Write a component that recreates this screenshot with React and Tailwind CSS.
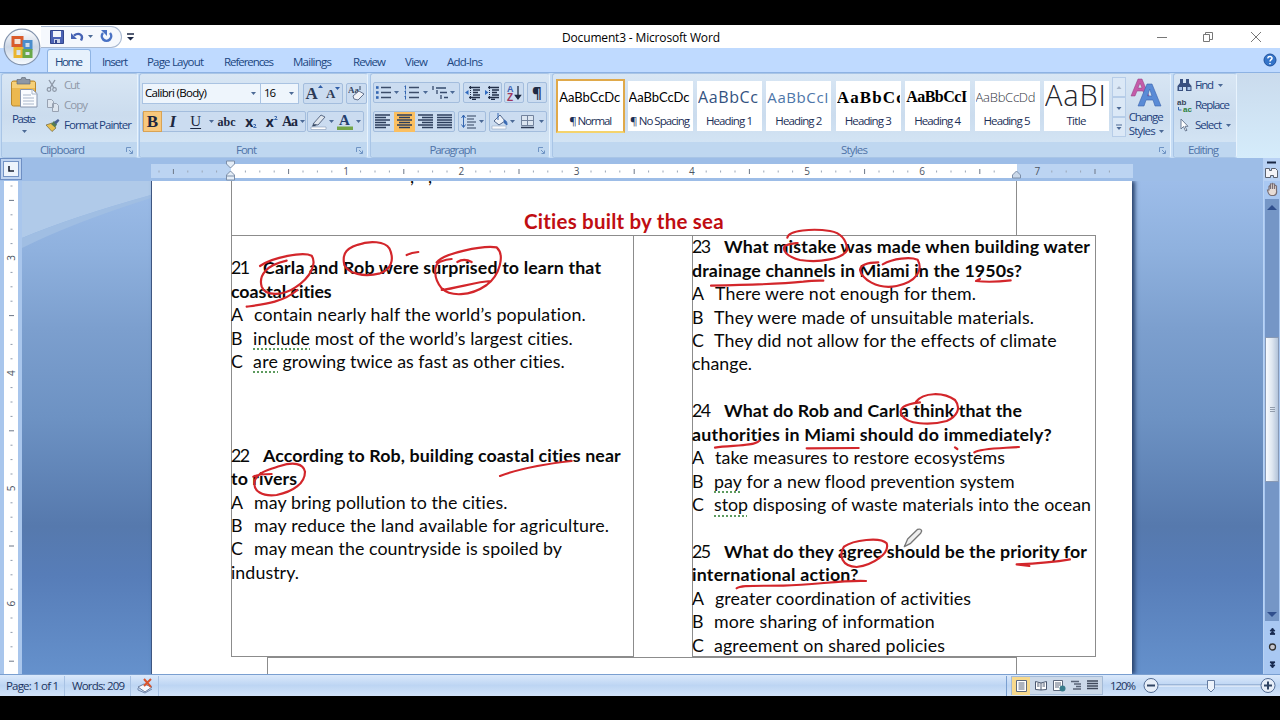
import { useLayoutEffect, useRef, useState } from "react";

/* Text spread over an exact width by adjusting its letter spacing. */
function Fit({ w, children, className = "" }) {
  const ref = useRef(null);
  const [ls, setLs] = useState(0);
  useLayoutEffect(() => {
    const el = ref.current;
    el.style.letterSpacing = "0px";
    el.style.width = "auto";
    const natural = el.getBoundingClientRect().width;
    const n = Math.max(1, el.textContent.length - 1);
    const next = (w - natural) / n;
    el.style.letterSpacing = next + "px";
    el.style.width = w + "px";
    setLs(next);
  }, [w, children]);
  return (
    <span ref={ref} className={"inline-block shrink-0 whitespace-pre " + className} style={{ letterSpacing: ls + "px", width: w }}>
      {children}
    </span>
  );
}

const Caret = ({ className = "" }) => (
  <svg width="5" height="3" viewBox="0 0 5 3" className={"shrink-0 " + className}>
    <path d="M0 0h5L2.500 3z" fill="#4c6a96" />
  </svg>
);

const Launcher = () => (
  <svg width="7" height="7" viewBox="0 0 7 7" className="mr-1">
    <path d="M.5 5V.5H5M3 3l3 3M6.500 3.500v3h-3" fill="none" stroke="#6f94c4" />
  </svg>
);

function Group({ label, w, children, launcher, labelW }) {
  return (
    <div className={"flex h-[85px] shrink-0 flex-col overflow-hidden rounded-[3px] border border-[#a9c5e6] border-r-[#e8f3fd] bg-linear-to-b from-[#d8e6f4] via-[#cbdcee] to-[#d7e8f7] " + w}>
      <div className="flex h-[68px] shrink-0">{children}</div>
      <div className="flex h-4 shrink-0 items-center bg-[#bfd7f0] text-[11.500px] text-[#4f74a8]">
        <div className="flex flex-1 justify-center pr-[3px]">
          <Fit w={labelW}>{label}</Fit>
        </div>
        {launcher && <Launcher />}
      </div>
    </div>
  );
}

const box = "flex h-[21px] shrink-0 items-center rounded-[2px] border border-[#a3bddd] bg-[#cbdcf0]";

function Lines({ x = 0, widths, color = "#2c3e5c", y = 1, gap = 2.5 }) {
  return (
    <svg width="16" height="15" viewBox="0 0 16 15" className="shrink-0">
      {widths.map(([a, b], i) => (
        <path key={i} d={`M${a + x} ${y + i * gap}H${b + x}`} stroke={color} strokeWidth="1.3" />
      ))}
    </svg>
  );
}

function Clipboard() {
  return (
    <Group label="Clipboard" w="w-[137px]" labelW={45} launcher>
      <div className="flex w-[44px] flex-col items-center pt-[3px] text-[11.500px] text-[#1d3f7c]">
        <svg width="28" height="32" viewBox="0 0 28 32">
          <rect x="1.500" y="4" width="24" height="25" rx="2" fill="#ecb84f" stroke="#b9892f" />
          <path d="M2 5h23v6H2z" fill="#f6d078" />
          <path d="M7 2.500h4a2.500 2.500 0 0 1 5 0h4V7H7z" fill="#8d97a5" stroke="#626b78" strokeWidth=".7" />
          <path d="M10.500 12.500h12l4.500 4v13.500h-16.500z" fill="#fafcff" stroke="#8895ad" />
          <path d="M22 12.500v4.500h5M13 18h8M13 21h11M13 24h11M13 27h11" fill="none" stroke="#a9b6ca" />
        </svg>
        <div className="mt-[2px] h-4 leading-4"><Fit w={24}>Paste</Fit></div>
        <Caret className="mt-[3px]" />
      </div>
      <div className="flex flex-col pt-[1px] text-[11.500px] text-[#9099a8]">
        <div className="flex h-5 items-center gap-1.5">
          <svg width="12" height="13" viewBox="0 0 12 13"><path d="M3 1l5 8M9 1L4 9" stroke="#8d97a6" strokeWidth="1.400" /><circle cx="3" cy="10.500" r="1.800" fill="none" stroke="#8d97a6" strokeWidth="1.200" /><circle cx="8.500" cy="10.500" r="1.800" fill="none" stroke="#8d97a6" strokeWidth="1.200" /></svg>
          <Fit w={16}>Cut</Fit>
        </div>
        <div className="flex h-5 items-center gap-1">
          <svg width="14" height="13" viewBox="0 0 14 13"><path d="M1.500.5h4l2 2v6h-6zM6.500 4.500h4l2 2v6h-6z" fill="#dde5ef" stroke="#98a2b2" /></svg>
          <Fit w={24}>Copy</Fit>
        </div>
        <div className="flex h-5 items-center gap-1 text-[#1d3f7c]">
          <svg width="14" height="13" viewBox="0 0 14 13"><path d="M0 6l6-2 4 5-4 3.500z" fill="#e9c14e" stroke="#6e6440" strokeWidth=".7" /><path d="M5 5l3-3 3 3.500-2 3z" fill="#557c54" /><path d="M8 3l4-3 1.500 1.500L10 5.500z" fill="#4b6193" /></svg>
          <Fit w={68}>Format Painter</Fit>
        </div>
      </div>
    </Group>
  );
}

function FontGroup() {
  return (
    <Group label="Font" w="ml-[1px] w-[229px]" labelW={21} launcher>
      <div className="flex flex-col pl-[2px] text-[11.500px]">
        <div className="mt-[8px] flex h-[22px] items-center">
          <div className="flex h-[21px] w-[119px] items-center justify-between border border-[#a9c3e2] bg-[#eef5fc] pr-1 pl-[2px] text-black"><Fit w={62}>Calibri (Body)</Fit><Caret /></div>
          <div className="flex h-[21px] w-[38px] items-center justify-between border border-l-0 border-[#a9c3e2] bg-[#eef5fc] pr-1 pl-[3px] text-black"><Fit w={12}>16</Fit><Caret /></div>
          <div className={box + " ml-[4px] w-[40px] justify-around font-['Liberation_Serif'] font-bold text-[#2c3b57]"}>
            <span className="flex items-start text-[17px] leading-none">A<svg width="5" height="4" viewBox="0 0 5 4"><path d="M0 3L2.500 0 5 3z" fill="#2f5da6" /></svg></span>
            <span className="flex items-start text-[13px] leading-none">A<svg width="5" height="4" viewBox="0 0 5 4"><path d="M0 0h5L2.500 3z" fill="#2f5da6" /></svg></span>
          </div>
          <div className={box + " ml-[3px] w-[21px] justify-center"}>
            <svg width="17" height="17" viewBox="0 0 17 17"><text x="0" y="8" fontSize="9" fontFamily="Liberation Serif" fontWeight="bold" fill="#34445f">Aa</text><path d="M5 11l6-5 5 3-6 6-4-1z" fill="#f1f3f8" stroke="#63728d" /><path d="M12 1v4" stroke="#34445f" /></svg>
          </div>
        </div>
        <div className={box + " mt-[7px] w-[164px] font-['Liberation_Serif'] font-bold text-[#1c2740]"}>
          <span className="flex h-[21px] w-[19px] items-center justify-center border border-[#d9a354] bg-[#f8c87c] text-[17px]">B</span>
          <span className="w-[22px] text-center text-[17px] italic">I</span>
          <span className="w-[24px] text-center text-[15px] font-normal underline underline-offset-2">U</span>
          <Caret className="mx-[1px]" />
          <span className="ml-[3px] w-[24px] text-[12px] line-through"><Fit w={18}>abc</Fit></span>
          <span className="flex w-[20px] justify-center font-['Open_Sans'] text-[14px] leading-none">x<svg width="4" height="14" viewBox="0 0 4 14"><path d="M.5 9.500h2v1.500l-2 1.500h3" fill="none" stroke="#2f5da6" strokeWidth=".9" /></svg></span>
          <span className="flex w-[21px] justify-center font-['Open_Sans'] text-[14px] leading-none">x<svg width="4" height="14" viewBox="0 0 4 14"><path d="M.5 1.500h2v1.500l-2 1.500h3" fill="none" stroke="#2f5da6" strokeWidth=".9" /></svg></span>
          <span className="w-[18px] text-[14px]"><Fit w={16}>Aa</Fit></span>
          <Caret />
        </div>
      </div>
      <div className="-ml-[60px] mt-[37px] flex">
        <div className={box + " w-[57px]"}>
          <svg width="19" height="17" viewBox="0 0 19 17" className="ml-[2px]"><path d="M3 11L11 2l4 2-7 8z" fill="#dfe6ee" stroke="#5b6b86" /><path d="M3 11l4 2-5 .5z" fill="#384861" /><path d="M1 14h15v2.500H1z" fill="#fff" stroke="#8598b5" strokeWidth=".6" /></svg>
          <Caret />
          <svg width="18" height="18" viewBox="0 0 18 18" className="ml-[2px]"><text x="3" y="12" fontSize="15" fontFamily="Liberation Serif" fontWeight="bold" fill="#23406f">A</text><path d="M1 13.500h16v3.500H1z" fill="#73a648" /></svg>
          <Caret className="ml-[2px]" />
        </div>
      </div>
    </Group>
  );
}

function ListIcon({ kind }) {
  return (
    <svg width="17" height="15" viewBox="0 0 17 15" className="shrink-0">
      {kind === "multi" ? (
        <g stroke="#35496b"><path d="M1 1v4M4 3h10M5 5v4M8 7.500h7M9 10v4M12 12.500h4" strokeWidth="1.300" /></g>
      ) : (
        <g>
          <path d="M6 2.500h10M6 7.500h10M6 12.500h10" stroke="#3b4c69" strokeWidth="1.300" />
          {[2.5, 7.5, 12.5].map((y) => kind === "num" ? <path key={y} d={`M2.500 ${y - 2}v4M1.500 ${y - 1}h1`} stroke="#3567b1" /> : <rect key={y} x="1" y={y - 1.3} width="2.600" height="2.600" fill="#3567b1" />)}
        </g>
      )}
    </svg>
  );
}

const Indent = ({ out }) => (
  <svg width="16" height="14" viewBox="0 0 16 14" className="shrink-0">
    <path d="M4 1.500h11M8 4h7M8 6.500h5M8 9h7M4 11.500h11M7 13.500h4" stroke="#222f48" strokeWidth="1.500" />
    <path d="M5.500 0v14" stroke="#222f48" strokeDasharray="1 1" />
    <path d={out ? "M0 6.500L3.500 4v5z" : "M4.500 6.500L1 4v5z"} fill="#2f6abf" />
  </svg>
);

function Paragraph() {
  const full = [0, 1, 2, 3, 4, 5].map(() => [0, 15]);
  const left = full.map((_, i) => [0, i % 2 ? 11 : 15]);
  const mid = full.map((_, i) => (i % 2 ? [2, 13] : [0, 15]));
  const right = full.map((_, i) => [i % 2 ? 4 : 0, 15]);
  return (
    <Group label="Paragraph" w="ml-[2px] w-[180px]" labelW={47} launcher>
      <div className="flex flex-col pl-[2px]">
        <div className="mt-[8px] flex">
          <div className={box + " w-[87px] pl-[1px]"}>
            <ListIcon /><Caret className="ml-[2px] mr-[4px]" /><ListIcon kind="num" /><Caret className="ml-[3px] mr-[4px]" /><ListIcon kind="multi" /><Caret className="ml-[1px]" />
          </div>
          <div className={box + " ml-[3px] w-[39px] justify-around"}><Indent out /><Indent /></div>
          <div className={box + " ml-[2px] w-[20px] justify-center"}>
            <svg width="16" height="18" viewBox="0 0 16 18"><text x="1" y="8" fontSize="9" fontFamily="Liberation Sans" fontWeight="bold" fill="#3b61b0">A</text><text x="1" y="17" fontSize="10" fontFamily="Liberation Sans" fontWeight="bold" fill="#a0365d">Z</text><path d="M12 2v12M9.500 11.500L12 15l2.500-3.500z" stroke="#1e2a42" strokeWidth="1.300" fill="#1e2a42" /></svg>
          </div>
          <div className={box + " ml-[3px] w-[20px] justify-center text-[15px] font-bold text-[#1d2a44]"}>¶</div>
        </div>
        <div className="mt-[8px] flex">
          <div className={box + " w-[82px] justify-between pr-[1px] pl-[1px]"}>
            <Lines widths={left} />
            <span className="flex h-[20px] w-[21px] items-center justify-center bg-[#fbbf60]"><Lines widths={mid} /></span>
            <Lines widths={right} />
            <Lines widths={full} />
          </div>
          <div className={box + " ml-[3px] w-[28px] gap-[2px] pl-[2px]"}>
            <svg width="16" height="15" viewBox="0 0 16 15"><path d="M6 2h9M6 5h7M6 8h9M6 11h7M6 14h9" stroke="#33435f" strokeWidth="1.200" /><path d="M2.500 1v12M.5 4l2-3 2 3M.5 10.500l2 3 2-3" fill="none" stroke="#3567b1" /></svg>
            <Caret />
          </div>
          <div className={box + " ml-[3px] w-[58px] pl-[1px]"}>
            <svg width="18" height="17" viewBox="0 0 18 17"><path d="M3 8l6-6 5 6-6 4z" fill="#eef2f8" stroke="#53688c" /><path d="M7 0v7M13 7c3 1 3 3 3 5-2-1-3-2-3-5z" stroke="#3768b2" fill="#3768b2" /><path d="M1 13h14v3H1z" fill="#f8fafc" stroke="#93a8c4" strokeWidth=".6" /></svg>
            <Caret className="ml-[1px] mr-[3px]" />
            <svg width="15" height="15" viewBox="0 0 15 15" className="ml-[2px]"><path d="M1.500 1.500h12v10h-12zM7.500 1.500v10M1.500 6.500h12" fill="#dbe5f1" stroke="#73839d" /><path d="M1 13.500h13" stroke="#2c3a54" strokeWidth="1.500" /></svg>
            <Caret className="ml-[4px]" />
          </div>
        </div>
      </div>
    </Group>
  );
}

const STYLES = [
  ["AaBbCcDc", "¶ Normal", 43, 61, "font-['Lato'] text-[13px] text-black"],
  ["AaBbCcDc", "¶ No Spacing", 60, 61, "font-['Lato'] text-[13px] text-black"],
  ["AaBbCc", "Heading 1", 47, 60, "font-['Open_Sans'] text-[16px] text-[#33527f]"],
  ["AaBbCcI", "Heading 2", 47, 61, "font-['Open_Sans'] text-[15px] text-[#4d76a9]"],
  ["AaBbCc", "Heading 3", 47, 67, "font-['Liberation_Serif'] font-bold text-[17px] text-black"],
  ["AaBbCcI", "Heading 4", 47, 61, "font-['Liberation_Serif'] font-bold text-[16px] text-black"],
  ["AaBbCcDd", "Heading 5", 47, 60, "font-['Open_Sans'] font-light text-[13px] text-[#33373f]"],
  ["AaBI", "Title", 20, 61, "font-['Open_Sans'] font-light text-[29px] text-[#1f242b]"],
];

function StylesGroup() {
  return (
    <Group label="Styles" w="ml-[2px] w-[619px]" labelW={27} launcher>
      <div className="flex h-[62px] pt-[5px] pl-[3px]">
        {STYLES.map(([sample, name, w, sw, cls], i) => (
          <div key={name} className={"flex h-[54px] w-[69.400px] shrink-0 flex-col items-center overflow-hidden border-2 " + (i === 0 ? "border-[#e0a94a] border-b-[#f4d36c] bg-white" : "border-transparent bg-clip-padding")}>
            <div className={"flex h-[50px] w-[65px] flex-col items-center bg-white"}>
              <div className={"flex h-[32px] w-[63px] shrink-0 items-center overflow-hidden whitespace-nowrap leading-none " + cls + (i === 7 ? " -mt-[3px] mb-[3px]" : "")}><Fit w={sw}>{sample}</Fit></div>
              <div className="flex h-[16px] shrink-0 items-center text-[11.500px] leading-4 text-[#1c2f57]"><Fit w={w}>{name}</Fit></div>
            </div>
          </div>
        ))}
      </div>
      <div className="mt-[3px] ml-[1px] flex h-[60px] w-[14px] flex-col">
        {["up", "down", "more"].map((k) => (
          <div key={k} className="flex h-5 items-center justify-center border border-[#b7cde8] bg-[#dbe8f6]">
            <svg width="6" height="7" viewBox="0 0 6 7"><path d={k === "up" ? "M.5 5L3 2l2.500 3z" : "M.5 3L3 6l2.500-3z"} fill={k === "up" ? "#a7b5c8" : "#4c6a96"} />{k === "more" && <path d="M0 1h6" stroke="#4c6a96" />}</svg>
          </div>
        ))}
      </div>
      <div className="flex w-[40px] flex-col items-center pt-[4px] text-[11.500px] text-[#1d3f7c]">
        <svg width="32" height="30" viewBox="0 0 32 30"><path fillRule="evenodd" d="M1 18L8 1h4l7 17h-4l-2-5H7l-2 5zM8 10h4l-2-5z" fill="#c45ba9" stroke="#8d3c7c" strokeWidth=".5" /><path fillRule="evenodd" d="M8 28L17 6h5l9 22h-6l-2-6h-7l-2 6zM17.500 18h4.500l-2.300-7z" fill="#5a8bd6" stroke="#3a63ac" strokeWidth=".6" /></svg>
        <div className="mt-[2px] h-[14px] leading-[14px]"><Fit w={35}>Change</Fit></div>
        <div className="flex h-[14px] items-center gap-[3px] leading-[14px]"><Fit w={27}>Styles</Fit><Caret /></div>
      </div>
    </Group>
  );
}

function Editing() {
  return (
    <Group label="Editing" w="ml-[2px] w-[64px]" labelW={31}>
      <div className="flex flex-col pt-[1px] pl-[3px] text-[11.500px] text-[#1d3f7c]">
        <div className="flex h-5 items-center gap-[3px]">
          <svg width="15" height="13" viewBox="0 0 15 13"><path d="M3 0h3v4h3V0h3v4l2.500 3v5H9V8H6v4H.5V7L3 4z" fill="#39507f" /><path d="M2 8h3v3H2zM10.500 8h3v3h-3z" fill="#a9c4e9" /></svg>
          <Fit w={19}>Find</Fit><Caret className="ml-[1px]" />
        </div>
        <div className="flex h-5 items-center gap-[3px]">
          <svg width="15" height="15" viewBox="0 0 15 15"><text x="0" y="7" fontSize="8" fontWeight="bold" fontFamily="Liberation Sans" fill="#394559">ab</text><text x="6" y="14" fontSize="8" fontWeight="bold" fontFamily="Liberation Sans" fill="#2b803c">ac</text><path d="M1.500 9v3h3" fill="none" stroke="#3567b1" /></svg>
          <Fit w={35}>Replace</Fit>
        </div>
        <div className="flex h-5 items-center gap-[4px]">
          <svg width="14" height="14" viewBox="0 0 14 14"><path d="M4 1v10l2.500-2.500L8.500 13l1.500-.7-2-4H11z" fill="#fff" stroke="#6d7d96" /></svg>
          <Fit w={27}>Select</Fit><Caret />
        </div>
      </div>
    </Group>
  );
}

function HRuler() {
  const ticks = [];
  for (let k = -5; k < 62; k++) {
    const x = 80 + k * 14.4;
    if (k === 0 || k === 54 || k === 55) continue;
    if (k > 0 && k % 8 === 0) ticks.push(<text key={k} x={x} y="11" fontSize="10" textAnchor="middle" fill="#4c5563" fontFamily="Open Sans">{k / 8}</text>);
    else if (Math.abs(k) % 4 === 0) ticks.push(<path key={k} d={`M${x} 5v5`} stroke="#6d7787" />);
    else ticks.push(<path key={k} d={`M${x} 6.500v2`} stroke="#9aa5b5" />);
  }
  return (
    <svg width="982" height="23" viewBox="0 -6 982 23">
      <rect width="982" height="14" fill="#bcd4f2" />
      <rect x="80" width="786" height="14" fill="#fff" />
      {ticks}
      <path d="M75.500-3h8v3l-4 4-4-4zM79.500 7l4 4v5h-8v-5zM75.500 12h8" fill="#e4edf7" stroke="#7d8fa9" />
      <path d="M861.500 11l4-4 4 4v3h-8z" fill="#cbd9ea" stroke="#7d8fa9" />
    </svg>
  );
}

function VRuler() {
  const ticks = [];
  for (let k = -5; k < 29; k++) {
    const y = 77 + k * 14.4;
    if (k >= 0 && k % 8 === 0) ticks.push(<text key={k} x="0" y="0" transform={`translate(11 ${y}) rotate(-90)`} fontSize="10" textAnchor="middle" fill="#4c5563" fontFamily="Open Sans">{3 + k / 8}</text>);
    else if (Math.abs(k) % 4 === 0) ticks.push(<path key={k} d={`M5 ${y}h5`} stroke="#6d7787" />);
    else ticks.push(<path key={k} d={`M6.500 ${y}h2`} stroke="#8f9aab" />);
  }
  return (
    <div className="flex w-[22px] shrink-0 bg-[#a9c6ec] pl-1">
      <svg width="14" height="493" viewBox="0 0 14 493" className="bg-white">{ticks}</svg>
    </div>
  );
}

/* Rows of a table cell: marker, marker width, text, text width, bold, remainder after an underlined word, its width */
const LEFT = [
  ["21", 32, "Carla and Rob were surprised to learn that", 338, true],
  ["", 0, "coastal cities", 101, true],
  ["A", 23, "contain nearly half the world’s population.", 332],
  ["B", 22, "include", 57, false, " most of the world’s largest cities.", 263],
  ["C", 22, "are", 25, false, " growing twice as fast as other cities.", 287],
  null, null, null,
  ["22", 32, "According to Rob, building coastal cities near", 358, true],
  ["", 0, "to rivers", 66, true],
  ["A", 23, "may bring pollution to the cities.", 254],
  ["B", 23, "may reduce the land available for agriculture.", 355],
  ["C", 23, "may mean the countryside is spoiled by", 308],
  ["", 0, "industry.", 68],
];
const RIGHT = [
  ["23", 32, "What mistake was made when building water", 366, true],
  ["", 0, "drainage channels in Miami in the 1950s?", 330, true],
  ["A", 23, "There were not enough for them.", 261],
  ["B", 22, "They were made of unsuitable materials.", 320],
  ["C", 22, "They did not allow for the effects of climate", 342],
  ["", 0, "change.", 60],
  null,
  ["24", 32, "What do Rob and Carla think that the", 298, true],
  ["", 0, "authorities in Miami should do immediately?", 360, true],
  ["A", 23, "take measures to restore ecosystems", 290],
  ["B", 22, "pay", 28, false, " for a new flood prevention system", 273],
  ["C", 22, "stop", 34, false, " disposing of waste materials into the ocean", 343],
  null,
  ["25", 32, "What do they agree should be the priority for", 363, true],
  ["", 0, "international action?", 167, true],
  ["A", 23, "greater coordination of activities", 257],
  ["B", 22, "more sharing of information", 221],
  ["C", 22, "agreement on shared policies", 231],
];

function Rows({ rows }) {
  return rows.map((r, i) => (
    <div key={i} className="-ml-px flex h-[23.450px] items-center whitespace-pre font-['Lato',sans-serif] text-[17.800px] leading-[23px] text-[#080808]">
      {r && (
        <>
          {r[0] && <span className="shrink-0" style={{ width: r[1] }}>{r[0].length > 1 ? <Fit w={19}>{r[0]}</Fit> : r[0]}</span>}
          <Fit w={r[3]} className={r[4] ? "font-bold" : r[5] ? "underline decoration-[#5d9b5f] decoration-dotted decoration-[1.5px] underline-offset-[4px] [text-decoration-skip-ink:none]" : ""}>{r[2]}</Fit>
          {r[5] && <Fit w={r[6]}>{r[5]}</Fit>}
        </>
      )}
    </div>
  ));
}

/* Freehand pen strokes over the document; each group has its own origin, three units per pixel. */
function Ink() {
  return (
    <svg className="pointer-events-none absolute top-0 left-0" width="1280" height="720" viewBox="0 0 1280 720">
      <g fill="none" stroke="#d3262b" strokeWidth="6.500" strokeLinecap="round" strokeLinejoin="round">
        <g transform="translate(150 165) scale(.33333)">
          <path d="M330 303C370 275 460 260 485 272C500 295 485 335 435 368C400 392 345 395 335 365C325 330 350 300 410 287M290 425C340 418 400 412 442 375" />
          <path d="M622 240C660 225 705 230 718 250C735 285 722 315 690 325C640 338 595 325 583 300C575 265 590 245 640 235M770 270Q785 263 805 261" />
          <path d="M860 292C880 265 1000 240 1040 247C1065 270 1050 330 1010 360C960 395 900 395 875 370C850 340 850 300 870 290C885 284 895 282 905 282M922 291C935 283 950 283 965 291M875 375C920 370 980 350 1022 348" />
        </g>
        <g transform="translate(640 175) scale(.33333)">
          <path d="M442 188C445 165 520 160 570 168C610 175 620 200 622 225C610 250 540 265 480 255C440 245 425 225 435 212C450 205 465 205 473 204" />
          <path d="M213 332C320 330 440 325 490 320Q520 316 550 317M728 268C760 250 810 245 833 254C850 285 830 320 770 333C710 345 665 310 660 285C662 270 680 262 715 262M1020 312L1008 318C1040 322 1080 320 1112 316" />
        </g>
        <g transform="translate(220 430) scale(.33333)">
          <path d="M840 138C900 115 990 100 1055 93M100 140C115 132 130 132 155 132M105 150C95 185 130 200 170 195C220 185 255 160 255 125C250 100 220 95 180 108C150 118 115 125 105 150" />
        </g>
        <g transform="translate(640 395) scale(.33333)">
          <path d="M828 20C850 -8 910 -10 945 15C965 40 950 65 920 78C870 92 800 88 785 60C775 40 790 28 840 22M225 158C270 150 340 155 357 138M500 160L656 159M945 157L952 162M1003 172C1020 160 1080 160 1137 156" />
          <path d="M612 455C640 435 720 425 740 445C750 475 700 510 650 516C605 515 595 480 612 455M1130 508C1200 505 1250 500 1290 493M1130 508L1168 513M290 580C300 570 350 573 430 572C530 570 600 555 678 558" />
          <path d="M793 455L803 432L833 403Q843 400 845 408L842 415L812 445Z" fill="#eee" stroke="#777" strokeWidth="4" />
        </g>
      </g>
    </svg>
  );
}

function OfficeButton() {
  return (
    <svg className="absolute top-[28px] left-[3px]" width="39" height="39" viewBox="0 0 39 39">
      <defs><linearGradient id="orb" x1="0" y1="0" x2="0" y2="1"><stop offset="0" stopColor="#fff" /><stop offset=".5" stopColor="#ccd7e6" /><stop offset="1" stopColor="#f7fbff" /></linearGradient></defs>
      <circle cx="19" cy="19" r="17.800" fill="url(#orb)" stroke="#8495ae" strokeWidth="1.200" />
      <g fill="none" strokeWidth="3">
        <path d="M10 9.500h9v8h-9z" stroke="#da5b2a" />
        <path d="M21 13.500h7v7h-7z" stroke="#4a8dcc" />
        <path d="M12 20.500h7v8h-7z" stroke="#e9b52f" />
        <path d="M21 22.500h7v6h-7z" stroke="#69a848" />
      </g>
      <path d="M12 11.500h5v4h-5z" fill="#fbe3cf" />
    </svg>
  );
}

const TABS = [["Insert", 102, 26], ["Page Layout", 147, 57], ["References", 224, 50], ["Mailings", 293, 39], ["Review", 353, 33], ["View", 405, 23], ["Add-Ins", 447, 36]];

function Tabs() {
  return (
    <div className="flex h-6 items-end bg-[#bfdaff] text-[11.500px] text-[#20467f]">
      <div className="ml-[47px] flex h-[23px] w-[44px] items-center justify-center rounded-t-[3px] border border-b-0 border-[#8fb4e4] bg-[#e6f1fc] pt-[2px]"><Fit w={28}>Home</Fit></div>
      {TABS.map(([t, x, w], i) => {
        const prev = i ? TABS[i - 1][1] + TABS[i - 1][2] : 91;
        return <div key={t} className="flex h-[22px] items-center pt-[2px]" style={{ paddingLeft: x - prev }}><Fit w={w}>{t}</Fit></div>;
      })}
      <div className="ml-auto flex h-6 items-center pr-[3px]">
        <svg width="14" height="14" viewBox="0 0 14 14"><circle cx="7" cy="7" r="6" fill="#3474c9" stroke="#20519c" /><path d="M4.700 5.300C5 2.800 9.300 3 9 5.300 8.800 6.700 7 6.600 7 8.500M7 10v1.300" fill="none" stroke="#fff" strokeWidth="1.500" /></svg>
      </div>
    </div>
  );
}

function TitleBar() {
  return (
    <div className="flex h-[23px] items-center bg-white">
      <div className="ml-[41px] flex h-[22px] w-[81px] items-center rounded-r-[11px] border border-l-0 border-[#a8b8d0] bg-[#f5f8fd] pl-[9px]">
        <svg width="14" height="14" viewBox="0 0 14 14"><path d="M.5.5h13v13h-13z" fill="#4b62b5" stroke="#33468d" /><path d="M3 1h8v6H3z" fill="#f1f4fb" /><path d="M4 9h6v4H4z" fill="#ccd5ea" /><path d="M5 10h2v3H5z" fill="#33468d" /></svg>
        <svg width="13" height="12" viewBox="0 0 13 12" className="ml-[7px]"><path d="M3 4.500C8 1 13 4 10 9.500" fill="none" stroke="#4562b4" strokeWidth="2.400" /><path d="M0 2v6h6z" fill="#4562b4" /></svg>
        <Caret className="ml-[4px]" />
        <svg width="13" height="13" viewBox="0 0 13 13" className="ml-[7px]"><path d="M3 3a4.700 4.700 0 1 0 7 0" fill="none" stroke="#4a72c4" strokeWidth="2.500" /><path d="M1 0h6v6z" fill="#4a72c4" /></svg>
      </div>
      <svg width="7" height="8" viewBox="0 0 7 8" className="ml-[5px]"><path d="M0 1h7" stroke="#1d2946" strokeWidth="1.500" /><path d="M0 4h7L3.500 7.500z" fill="#1d2946" /></svg>
      <div className="ml-[428px] pt-[2px] text-[12px] text-black"><Fit w={158}>Document3 - Microsoft Word</Fit></div>
      <svg className="mr-[18px] ml-auto" width="106" height="12" viewBox="0 0 106 12">
        <path d="M1 6.500h10M47.500 3.500h6v7h-6zM49.500 3.500v-2h7v7h-3M95 1l10 10M105 1L95 11" fill="none" stroke="#777" />
      </svg>
    </div>
  );
}

function ScrollBar() {
  return (
    <div className="flex w-[17px] shrink-0 flex-col items-center border-l border-[#b9d3f4] bg-[#a9c8f2]">
      <svg width="15" height="18" viewBox="0 0 15 18"><path d="M2.500 9l1.500 0V5.500L5.500 4v4-5L7.500 2.500V8 2.500L9.500 3v5-4l2 1v4.500C12 12 10.500 14 9 14.500H6C4 14 3 12 2.500 9z" fill="#e6dcd6" stroke="#796f75" strokeWidth="1.200" /></svg>
      <div className="flex h-[422px] w-[14px] flex-col items-center bg-[#7596c6]">
        <svg width="10" height="138" viewBox="0 0 10 138"><path d="M0 11l5-5 5 5z" fill="#304f8d" /></svg>
        <div className="flex h-[145px] w-[14px] items-center justify-center border border-[#8799b5] bg-linear-to-r from-[#f8fbff] via-[#dfe7f0] to-[#b3c4da]">
          <svg width="5" height="5" viewBox="0 0 5 5"><path d="M0 .5h5M0 2.500h5M0 4.500h5" stroke="#929dac" /></svg>
        </div>
        <svg className="mt-auto" width="10" height="12" viewBox="0 0 10 12"><path d="M0 3l5 5 5-5z" fill="#304f8d" /></svg>
      </div>
      <svg width="11" height="53" viewBox="0 0 11 53"><path d="M3 10l2.500-3L8 10zM3 13l2.500-3L8 13zM3 13.500h5" fill="#16294f" stroke="#16294f" strokeWidth=".8" /><circle cx="5.500" cy="26" r="3" fill="#c5c6ce" stroke="#333" strokeWidth="1.300" /><path d="M3 41l2.500 3L8 41zM3 44l2.500 3L8 44zM3 41h5" fill="#16294f" stroke="#16294f" strokeWidth=".8" /></svg>
    </div>
  );
}

function Document() {
  return (
    <div className="flex h-[493px] w-[981px] shrink-0 flex-col overflow-hidden border-l border-[#3e5681] bg-white pl-[79px] shadow-[3px_0_4px_#2b4570]">
      <div className="flex h-[55px] w-[786px] shrink-0 flex-col items-center border-x border-b border-[#8c8c8c]">
        <div className="-mt-[15px] flex h-[20px] self-start pl-[178px] font-['Lato'] text-[18px] leading-5"><Fit w={22}>{", ,"}</Fit></div>
        <div className="mt-[23px] flex h-6 items-center font-['Lato',sans-serif] text-[20.500px] font-bold text-[#c00d12]"><Fit w={200}>Cities built by the sea</Fit></div>
      </div>
      <div className="-mt-px flex h-[422px] shrink-0">
        <div className="w-[403px] shrink-0 border border-[#8c8c8c] pt-[20px]"><Rows rows={LEFT} /></div>
        <div className="w-[58px] shrink-0" />
        <div className="w-[404px] shrink-0 border border-[#8c8c8c]"><div className="-mt-px"><Rows rows={RIGHT} /></div></div>
      </div>
      <div className="ml-[36px] h-5 w-[750px] shrink-0 border border-[#8c8c8c]" />
    </div>
  );
}

function StatusBar() {
  const sep = "ml-[5px] h-[20px] w-px bg-[#a8c2e4]";
  return (
    <div className="flex h-[22px] items-center border-t border-[#7a9fd0] bg-linear-to-b from-[#dbe9fb] via-[#bdd5f3] to-[#d3e4f9] text-[11.500px] text-[#1b3460]">
      <div className="ml-[6px]"><Fit w={53}>Page: 1 of 1</Fit></div>
      <div className={sep} />
      <div className="ml-[7px]"><Fit w={53}>Words: 209</Fit></div>
      <div className={sep} />
      <svg width="16" height="16" viewBox="0 0 16 16" className="ml-[6px]"><path d="M1 9l6-3 8 3-7 5z" fill="#f7f9fd" stroke="#697b9c" /><path d="M1 10v2l7 3 7-4" fill="none" stroke="#7388ad" /><path d="M7 1l7 8M14 1L7 8" stroke="#d9542c" strokeWidth="2" /></svg>
      <div className={sep} />
      <div className="ml-auto flex h-[20px] items-center border-l border-[#7a9fd0] pl-[4px]">
        <div className="flex h-[19px] w-[92px] items-center justify-between border border-[#a4bad6] bg-[#ccd9e9] pr-[4px]">
          <span className="flex h-[18px] w-[18px] items-center justify-center bg-[#f7d98c]"><svg width="11" height="12" viewBox="0 0 11 12"><path d="M.5.5h10v11H.5zM2.500 3h6M2.500 5h6M2.500 7h6M2.500 9h6" fill="#fff" stroke="#5c687c" /></svg></span>
          <svg width="12" height="11" viewBox="0 0 12 11"><path d="M.5 1.500L6 3l5.500-1.500v8L6 10 .5 9.500zM6 3v7M2 4h2.500M2 6h2.500M7.500 4H10M7.500 6H10" fill="#fff" stroke="#4b5870" /></svg>
          <svg width="13" height="12" viewBox="0 0 13 12"><path d="M.5.5h9v10h-9zM2 3h6M2 5h6M2 7h4" fill="#fff" stroke="#5c687c" /><circle cx="9.500" cy="8.500" r="3" fill="#377b8b" /></svg>
          <svg width="11" height="11" viewBox="0 0 11 11"><path d="M0 1.500h8M3 4h7M5 6.500h5M2 9h8" stroke="#596477" strokeWidth="1.500" /></svg>
          <svg width="11" height="11" viewBox="0 0 11 11"><path d="M0 1h11M0 3.500h11M0 6h11M0 8.500h11" stroke="#3f495b" strokeWidth="1.500" /></svg>
        </div>
        <div className="ml-[7px]"><Fit w={26}>120%</Fit></div>
        <svg width="144" height="19" viewBox="0 0 144 19">
          <path d="M22 9h103" stroke="#7794be" /><path d="M22 10h103" stroke="#f3f8ff" />
          {[15, 132].map((x) => <g key={x}><circle cx={x} cy="9.500" r="7" fill="#e7eef8" stroke="#516b94" /><path d={x === 15 ? "M11 9.500h8" : "M128 9.500h8M132 5.500v8"} stroke="#304564" strokeWidth="2" /></g>)}
          <path d="M71.500 4.500h7v8L75 16 71.500 12.500z" fill="#edf3fb" stroke="#647ba0" />
        </svg>
      </div>
    </div>
  );
}

export default function App() {
  return (
    <div className="relative flex h-[720px] w-[1280px] flex-col overflow-hidden bg-black py-[25px] pb-6 font-['Open_Sans','Noto_Sans',sans-serif]">
      <TitleBar />
      <Tabs />
      <div className="flex h-[86px] border-t border-[#8db2e3] bg-[#c5dcf5] pl-[1px]">
        <Clipboard />
        <FontGroup />
        <Paragraph />
        <StylesGroup />
        <Editing />
        <div className="h-[85px] flex-1 bg-linear-to-b from-[#cadbed] to-[#d5ecfb]" />
      </div>
      <div className="flex h-[23px] bg-[#9dbde7]">
        <div className="flex h-[22px] w-[22px] items-center justify-center border border-[#6e8fc4] bg-[#bed3f0]">
          <div className="flex h-4 w-4 items-center justify-center border border-[#7393c4] bg-[#edf4fc]"><svg width="6" height="6" viewBox="0 0 6 6"><path d="M1 0v5h5" fill="none" stroke="#1a2030" strokeWidth="1.600" /></svg></div>
        </div>
        <div className="ml-[129px] flex"><HRuler /></div>
        <div className="ml-auto flex w-[17px] flex-col items-center bg-[#b9d2f4]">
          <svg width="15" height="23" viewBox="0 0 15 23"><path d="M3 4.500h9" stroke="#182744" strokeWidth="2" /><path d="M1.500 10.500h4v2h2v-2h4l2 2v7h-4v-2h-3v2h-5z" fill="#f4f4f8" stroke="#5b6270" /></svg>
        </div>
      </div>
      <div className="flex h-[493px] shrink-0">
        <VRuler />
        <div className="flex flex-1 overflow-hidden bg-[linear-gradient(#9dbde9_0%,#8fb1de_14%,#7c9fce_30%,#6d92c3_48%,#5679ad_70%,#577db8_80%,#6591cc_100%)]">
          <svg width="129" height="90" viewBox="0 0 129 90" className="shrink-0"><path d="M0 0h129v14Q50 36 0 57z" fill="#b0cae9" /><path d="M0 57Q50 36 129 14v3Q50 42 0 67z" fill="#a0bee3" /></svg>
          <Document />
        </div>
        <ScrollBar />
      </div>
      <StatusBar />
      <OfficeButton />
      <Ink />
    </div>
  );
}
